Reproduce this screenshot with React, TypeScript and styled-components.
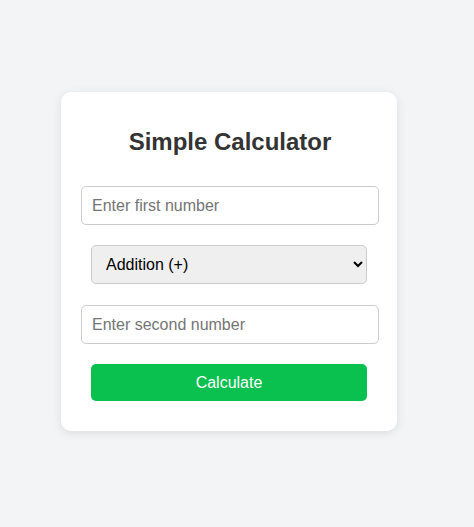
import { useState } from "react";
import styled, { createGlobalStyle } from "styled-components";

const GlobalStyle = createGlobalStyle`
  html, body {
    margin: 0;
    padding: 0;
    background-color: #f3f4f6;
    font-family: "Liberation Sans", Arial, sans-serif;
  }
`;

const Page = styled.main`
  min-height: 527px;
  box-sizing: border-box;
  padding: 92px 0 0 61px;
`;

const Card = styled.div`
  width: 336px;
  box-sizing: border-box;
  padding: 36px 18px 30px 20px;
  background-color: #fff;
  border-radius: 10px;
  box-shadow: 0 2px 10px rgba(0, 0, 0, 0.1);
  display: flex;
  flex-direction: column;
  align-items: center;

  h2 {
    margin: 0 0 31px;
    font-size: 24px;
    font-weight: bold;
    color: #333;
    line-height: 27px;
  }
`;

const Field = styled.input`
  width: 298px;
  height: 39px;
  box-sizing: border-box;
  padding: 0 10px;
  border: 1px solid #ccc;
  border-radius: 5px;
  font-family: "Liberation Sans", Arial, sans-serif;
  font-size: 16px;
  color: #222;
  background: #fff;
  outline: none;

  &::placeholder {
    color: #757575;
  }
`;

const Select = styled.select`
  width: 276px;
  height: 39px;
  box-sizing: border-box;
  margin: 20px 2px 21px 0;
  padding: 0 10px;
  border: 1px solid #ccc;
  border-radius: 5px;
  background-color: #efefef;
  font-family: "Liberation Sans", Arial, sans-serif;
  font-size: 16px;
  color: #000;
`;

const Button = styled.button<{ $tone: string }>`
  width: 276px;
  height: 37px;
  margin: 20px 2px 0 0;
  border: none;
  border-radius: 5px;
  background-color: ${(p) => p.$tone};
  color: #fff;
  font-family: "Liberation Sans", Arial, sans-serif;
  font-size: 16px;
  cursor: pointer;
`;

export default function App() {
  const [a, setA] = useState("");
  const [b, setB] = useState("");
  const [op, setOp] = useState("add");

  return (
    <Page>
      <GlobalStyle />
      <Card>
        <h2>Simple Calculator</h2>
        <Field
          type="number"
          placeholder="Enter first number"
          value={a}
          onChange={(e) => setA(e.target.value)}
        />
        <Select value={op} onChange={(e) => setOp(e.target.value)}>
          <option value="add">Addition (+)</option>
          <option value="sub">Subtraction (-)</option>
          <option value="mul">Multiplication (×)</option>
          <option value="div">Division (÷)</option>
        </Select>
        <Field
          type="number"
          placeholder="Enter second number"
          value={b}
          onChange={(e) => setB(e.target.value)}
        />
        <Button $tone="#0ac04f">Calculate</Button>
      </Card>
    </Page>
  );
}
